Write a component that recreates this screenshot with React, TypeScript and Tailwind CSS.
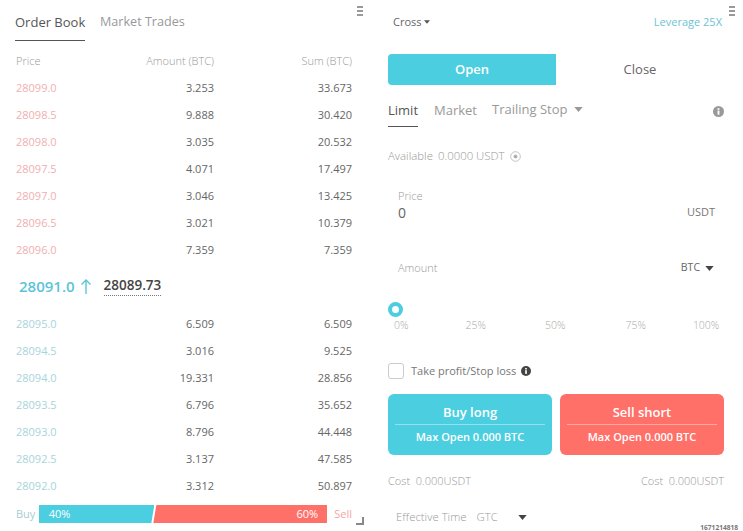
const asks = [
  ['28099.0', '3.253', '33.673'],
  ['28098.5', '9.888', '30.420'],
  ['28098.0', '3.035', '20.532'],
  ['28097.5', '4.071', '17.497'],
  ['28097.0', '3.046', '13.425'],
  ['28096.5', '3.021', '10.379'],
  ['28096.0', '7.359', '7.359'],
];

const bids = [
  ['28095.0', '6.509', '6.509'],
  ['28094.5', '3.016', '9.525'],
  ['28094.0', '19.331', '28.856'],
  ['28093.5', '6.796', '35.652'],
  ['28093.0', '8.796', '44.448'],
  ['28092.5', '3.137', '47.585'],
  ['28092.0', '3.312', '50.897'],
];

function MenuIcon() {
  return (
    <div className="flex flex-col gap-[2px]">
      <div className="w-[6px] h-[2px] bg-[#999999]" />
      <div className="w-[6px] h-[2px] bg-[#999999]" />
      <div className="w-[6px] h-[2px] bg-[#999999]" />
    </div>
  );
}

function Caret({ className }: { className: string }) {
  return (
    <svg className={className} viewBox="0 0 10 6">
      <path d="M0 0h10L5 6z" fill="currentColor" />
    </svg>
  );
}

function InfoIcon({ className }: { className: string }) {
  return (
    <svg className={className} viewBox="0 0 12 12">
      <circle cx="6" cy="6" r="6" fill="currentColor" />
      <rect x="5" y="5" width="2" height="4.5" fill="#fff" />
      <rect x="5" y="2.4" width="2" height="1.8" fill="#fff" />
    </svg>
  );
}

function Rows({ rows, color }: { rows: string[][]; color: string }) {
  return (
    <div className="flex flex-col">
      {rows.map((r) => (
        <div key={r[0]} className="grid grid-cols-[1fr_1fr_1fr] h-[27px] items-center text-[11px] text-[#666666]">
          <span className={color}>{r[0]}</span>
          <span className="text-right mr-[26px]">{r[1]}</span>
          <span className="text-right">{r[2]}</span>
        </div>
      ))}
    </div>
  );
}

function OrderBook() {
  return (
    <div className="w-[372px] shrink-0 pl-[16px] pr-[20px] flex flex-col relative">
      <div className="absolute right-[9px] top-[6px]">
        <MenuIcon />
      </div>
      <div className="flex gap-[15px] text-[13px] h-[41px] items-start pt-[13px] ml-[-1px] mr-[200px]">
        <div className="text-[#555555] h-[28px] border-b border-[#555555] w-[70px] whitespace-nowrap">Order Book</div>
        <div className="text-[#999999] text-[12.6px] whitespace-nowrap">Market Trades</div>
      </div>
      <div className="grid grid-cols-[1fr_1fr_1fr] h-[34px] pt-[6px] items-center text-[11px] font-light text-[#999999]">
        <span>Price</span>
        <span className="text-right mr-[26px] whitespace-nowrap">Amount (BTC)</span>
        <span className="text-right">Sum (BTC)</span>
      </div>
      <Rows rows={asks} color="text-[#f0b0b0]" />
      <div className="flex items-center h-[47px] pl-[3px] pb-[3px]">
        <span className="text-[15px] font-semibold text-[#5cc4d9]">28091.0</span>
        <svg className="w-[12px] h-[15px] ml-[5px] text-[#5cc4d9]" viewBox="0 0 12 15" fill="none" stroke="currentColor" strokeWidth="1.4">
          <path d="M6 15V1M1.5 5.5 6 1l4.5 4.5" />
        </svg>
        <span className="ml-[12px] text-[13.5px] font-semibold text-[#444444] border-b border-dotted border-[#777777] leading-[19px]">
          28089.73
        </span>
      </div>
      <Rows rows={bids} color="text-[#a8d4dc]" />
      <div className="flex items-center h-[18px] mt-[5px] text-[11px]">
        <span className="w-[23px] text-[#a8cdd5]">Buy</span>
        <div className="w-[117px] h-[18px] bg-[#4acee0] text-white pl-[10px] leading-[18px] [clip-path:polygon(0_0,100%_0,calc(100%-3px)_100%,0_100%)]">
          40%
        </div>
        <div className="w-[176px] h-[18px] bg-[#ff7069] text-white pr-[9px] ml-[-1px] text-right leading-[18px] [clip-path:polygon(3px_0,100%_0,100%_100%,0_100%)]">
          60%
        </div>
        <span className="ml-[7px] text-[#f2a7a3]">Sell</span>
      </div>
      <div className="absolute left-[356px] top-[517px] w-[8px] h-[8px] border-r-2 border-b-2 border-[#888888]" />
    </div>
  );
}

function TradeForm() {
  return (
    <div className="flex-1 pl-[16px] pr-[19px] flex flex-col relative">
      <div className="absolute right-[8px] top-[6px]">
        <MenuIcon />
      </div>
      <div className="flex items-center justify-between h-[44px] pl-[5px] pr-[2px] text-[11px]">
        <div className="flex items-center gap-[2px] text-[#666666]">
          Cross
          <Caret className="w-[6px] h-[4px] text-[#555555]" />
        </div>
        <span className="text-[#6cc3d5]">Leverage 25X</span>
      </div>
      <div className="flex h-[31px] mt-[10px] text-[13px]">
        <button className="w-[168px] bg-[#4acee0] text-white font-semibold rounded-l-[4px]">Open</button>
        <button className="flex-1 text-[#666666]">Close</button>
      </div>
      <div className="flex items-start h-[47px] mt-[4px] text-[13px] relative">
        <div className="text-[#555555] h-[37px] pt-[11px] border-b border-[#555555] w-[30px] mt-[1px]">Limit</div>
        <div className="text-[#999999] ml-[16px] pt-[12px]">Market</div>
        <div className="text-[#999999] ml-[15px] pt-[11px] flex items-center gap-[6px]">
          Trailing Stop
          <Caret className="w-[9px] h-[5px] text-[#999999]" />
        </div>
        <InfoIcon className="absolute right-[0px] top-[17px] w-[11px] h-[11px] text-[#999999]" />
      </div>
      <div className="flex items-center gap-[5px] h-[18px] mt-[11px] text-[11.4px] font-light text-[#999999]">
        <span>Available</span>
        <span>0.0000 USDT</span>
        <svg className="w-[11px] h-[11px]" viewBox="0 0 11 11" fill="none" stroke="#aaaaaa" strokeWidth="0.7">
          <circle cx="5.5" cy="5.5" r="4.8" />
          <circle cx="5.5" cy="5.5" r="1.6" fill="#aaaaaa" />
        </svg>
      </div>
      <div className="pl-[10px] pr-[9px] mt-[23px]">
        <div className="text-[11px] font-light text-[#999999] leading-[15px]">Price</div>
        <div className="flex items-center justify-between h-[19px]">
          <span className="text-[14px] text-[#666666]">0</span>
          <span className="text-[11px] text-[#777777]">USDT</span>
        </div>
      </div>
      <div className="flex items-center justify-between pl-[10px] pr-[10px] h-[20px] mt-[36px] text-[11px]">
        <span className="font-light text-[#999999]">Amount</span>
        <div className="flex items-center gap-[5px] text-[10.5px] text-[#666666]">
          BTC
          <Caret className="w-[9px] h-[5px] text-[#444444]" />
        </div>
      </div>
      <div className="w-[15px] h-[15px] rounded-full border-[4px] border-[#4acee0] bg-white mt-[24px]" />
      <div className="flex pl-[6px] text-[10.5px] font-light text-[#aaaaaa] leading-[14px] mt-[1px]">
        <span>0%</span>
        <span className="ml-[57px]">25%</span>
        <span className="ml-[59px]">50%</span>
        <span className="ml-[60px]">75%</span>
        <span className="ml-[47px]">100%</span>
      </div>
      <div className="flex items-center h-[16px] mt-[31px]">
        <div className="w-[16px] h-[16px] rounded-[3px] border border-[#cccccc]" />
        <span className="ml-[7px] text-[11px] text-[#777777]">Take profit/Stop loss</span>
        <InfoIcon className="ml-[5px] w-[10px] h-[10px] text-[#444444]" />
      </div>
      <div className="flex gap-[8px] h-[61px] mt-[15px] text-white">
        <Action title="Buy long" bg="bg-[#4acee0]" />
        <Action title="Sell short" bg="bg-[#ff7069]" />
      </div>
      <div className="flex justify-between text-[11px] font-light text-[#999999] h-[16px] mt-[18px] items-center">
        <span>Cost&nbsp; 0.000USDT</span>
        <span>Cost&nbsp; 0.000USDT</span>
      </div>
      <div className="flex items-center h-[16px] mt-[20px] pl-[8px] text-[11.4px] font-light text-[#999999]">
        <span>Effective Time</span>
        <span className="ml-[10px]">GTC</span>
        <Caret className="ml-[20px] w-[9px] h-[5px] text-[#444444]" />
      </div>
      <div className="absolute right-[5px] top-[525px] text-[6.6px] leading-[6px] font-bold text-[#777777]">1671214818</div>
    </div>
  );
}

function Action({ title, bg }: { title: string; bg: string }) {
  return (
    <button className={`w-[164px] rounded-[6px] px-[7px] flex flex-col ${bg}`}>
      <span className="h-[31px] w-full border-b border-white/40 text-[13px] font-semibold leading-[36px]">{title}</span>
      <span className="w-full text-[11px] font-semibold leading-[24px] whitespace-nowrap">Max Open 0.000 BTC</span>
    </button>
  );
}

export default function App() {
  return (
    <div className="w-[743px] h-[531px] overflow-hidden bg-white flex font-['Open_Sans',sans-serif]">
      <OrderBook />
      <TradeForm />
    </div>
  );
}
